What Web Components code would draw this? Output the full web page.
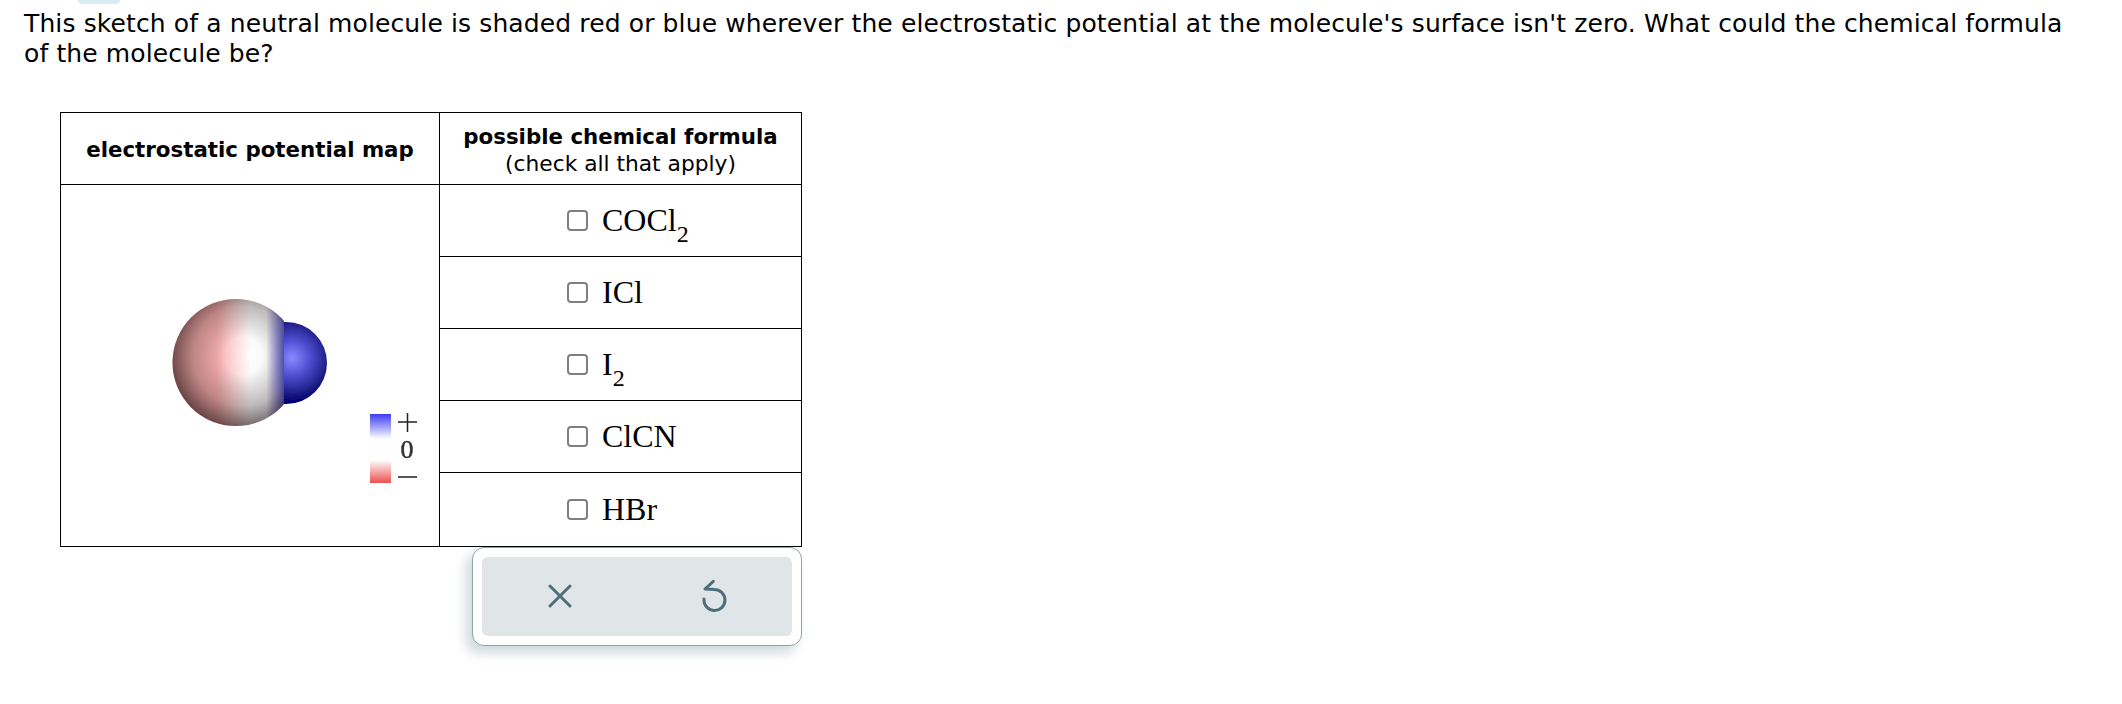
<!DOCTYPE html>
<html lang="en"><head><meta charset="utf-8"><title>Electrostatic potential map</title>
<style>html,body{margin:0;padding:0;background:#fff;color:#000;font-family:"DejaVu Sans",sans-serif}</style>
</head><body>
<question-page>
  <question-text>This sketch of a neutral molecule is shaded red or blue wherever the electrostatic potential at the molecule's surface isn't zero. What could the chemical formula of the molecule be?</question-text>
  <answer-table>
    <potential-map slot="map"></potential-map>
    <formula-option>COCl<sub>2</sub></formula-option>
    <formula-option>ICl</formula-option>
    <formula-option>I<sub>2</sub></formula-option>
    <formula-option>ClCN</formula-option>
    <formula-option>HBr</formula-option>
  </answer-table>
  <action-bar></action-bar>
</question-page>
<script>
function def(name, html){
  customElements.define(name, class extends HTMLElement{
    constructor(){super();this.attachShadow({mode:'open'}).innerHTML=html;}
  });
}
def('question-page',`<style>:host{display:block;width:2122px;height:704px;overflow:hidden}
.tab{width:42px;height:4px;margin-left:78px;background:#d6edf3;border-radius:0 0 10px 10px}</style>
<div class="tab"></div><slot></slot>`);
def('question-text',`<style>:host{display:block;padding:5px 40px 0 24px;font:25px/30px "DejaVu Sans",Verdana,sans-serif;height:103px;letter-spacing:.12px}
div{height:60px}</style><div><slot></slot></div>`);
def('answer-table',`<style>:host{display:block;margin-left:60px;width:742px;box-sizing:border-box;border:1px solid #000;font:21.750px/27px "DejaVu Sans",Verdana,sans-serif}
.g{display:grid;grid-template-columns:378px 1fr;grid-template-rows:72px 361px}
.h{display:flex;flex-direction:column;align-items:center;justify-content:center;text-align:center;border-bottom:1px solid #000;padding-top:1px}
.h+.h{border-left:1px solid #000;padding-top:3px}
b{font-weight:700;font-size:21.350px}
.m{display:block;min-width:0}
.o{border-left:1px solid #000;display:grid;grid-template-rows:repeat(4,72px) 1fr}
</style><div class="g"><div class="h"><b>electrostatic potential map</b></div><div class="h"><b>possible chemical formula</b><span>(check all that apply)</span></div>
<div class="m"><slot name="map"></slot></div><div class="o"><slot></slot></div></div>`);
def('formula-option',`<style>:host{display:flex;align-items:center;padding-left:127px;border-bottom:1px solid #000;font:32px/40px "Liberation Serif","Times New Roman",serif;color:#000}
:host(:last-child){border-bottom:0}
i{display:block;width:17px;height:17px;border:2px solid #7f7f7f;border-radius:4px;margin-right:14px;flex:none;background:#fff}
span{display:block;white-space:nowrap;position:relative;top:-1px}
::slotted(sub){font-size:24px;line-height:0;vertical-align:-11px}</style><i></i><span><slot></slot></span>`);
def('potential-map',`<style>:host{display:block;width:378px;height:361px}svg{display:block;width:378px;height:361px}
text{font-family:"Liberation Serif",serif;fill:#333;stroke:#333;stroke-width:.5px}</style>
<svg viewBox="61 185 378 361" aria-label="electrostatic potential map">
<defs>
<linearGradient id="c" gradientUnits="userSpaceOnUse" x1="173" x2="284" y1="0" y2="0">
<stop offset="0" stop-color="#ffb4b4"/><stop offset=".4" stop-color="#ffb4b4"/><stop offset=".7" stop-color="#fff"/><stop offset=".84" stop-color="#fff"/><stop offset="1" stop-color="#6060d0"/></linearGradient>
<radialGradient id="s" gradientUnits="userSpaceOnUse" cx="243" cy="356" r="76">
<stop offset="0" stop-color="#000" stop-opacity="0"/><stop offset=".25" stop-color="#000" stop-opacity=".02"/><stop offset=".65" stop-color="#201010" stop-opacity=".28"/><stop offset="1" stop-color="#100000" stop-opacity=".68"/></radialGradient>
<radialGradient id="b" gradientUnits="userSpaceOnUse" cx="292" cy="358" r="42">
<stop offset="0" stop-color="#8a8aff"/><stop offset=".4" stop-color="#5252d6"/><stop offset=".8" stop-color="#23238e"/><stop offset="1" stop-color="#060670"/></radialGradient>
<linearGradient id="lb" x1="0" x2="0" y1="0" y2="1"><stop offset="0" stop-color="#3c3cf0"/><stop offset="1" stop-color="#fff"/></linearGradient>
<linearGradient id="lr" x1="0" x2="0" y1="0" y2="1"><stop offset="0" stop-color="#fff"/><stop offset="1" stop-color="#ec4f4f"/></linearGradient>
<clipPath id="l"><rect x="150" y="280" width="134" height="170"/></clipPath>
<clipPath id="r"><rect x="283.500" y="280" width="60" height="170"/></clipPath>
<filter id="f" x="-5%" y="-5%" width="110%" height="110%"><feGaussianBlur stdDeviation=".7"/></filter>
</defs>
<g filter="url(#f)">
<circle cx="286" cy="363" r="41" fill="url(#b)" clip-path="url(#r)"/>
<g clip-path="url(#l)"><circle cx="236" cy="362.500" r="63.500" fill="url(#c)"/><circle cx="236" cy="362.500" r="63.500" fill="url(#s)"/></g>
<rect x="370" y="414" width="21" height="25" fill="url(#lb)"/>
<rect x="370" y="460" width="21" height="23" fill="url(#lr)"/>
<path d="M398 422h19M407.500 413v19" stroke="#222" stroke-width="1.500" fill="none"/>
<path d="M398 477h19" stroke="#555" stroke-width="2" fill="none"/>
<text x="407" y="458" font-size="26" text-anchor="middle">0</text>
</g></svg>`);
def('action-bar',`<style>:host{display:block;margin:0 0 0 472px;width:330px;height:99px;box-sizing:border-box;border:1px solid #8fa3ab;border-radius:12px;padding:9px;background:#fff;box-shadow:-6px 7px 12px rgba(90,120,130,.28)}
.in{height:79px;background:#e0e5e7;border-radius:6px;display:grid;grid-template-columns:1fr 1fr;align-items:center;justify-items:center}
svg{display:block;fill:none;stroke:#4f6e7b;stroke-width:3;stroke-linecap:round;stroke-linejoin:round}
.a{margin-top:-2px}.b{margin:-5px 0 0 0}</style>
<div class="in"><svg class="a" width="24" height="24" viewBox="0 0 24 24"><path d="M2 2L22 22M22 2L2 22"/></svg>
<svg class="b" width="40" height="40" viewBox="0 0 40 40"><path d="M18.300 7.300L10 15L19.500 15.500A10.500 10.500 0 1 1 9 25"/></svg></div>`);
</script>
</body></html>
